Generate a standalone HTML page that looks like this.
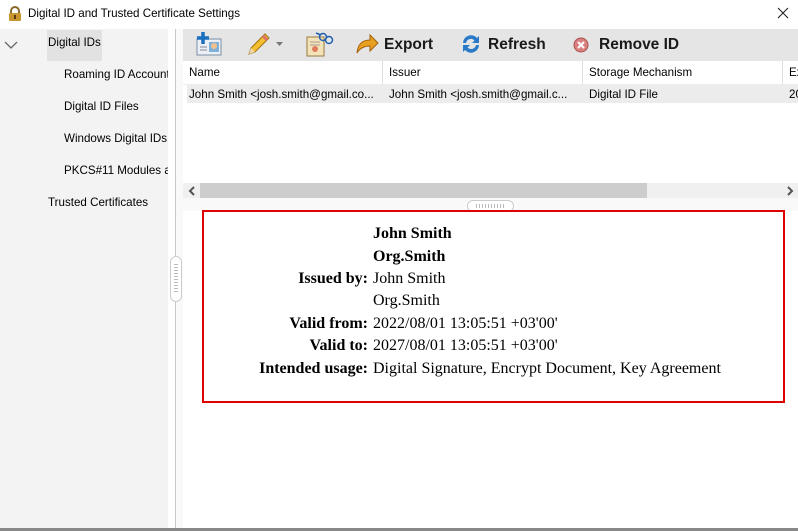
<!DOCTYPE html>
<html><head><meta charset="utf-8"><style>
*{margin:0;padding:0;box-sizing:border-box}
body{width:798px;height:531px;overflow:hidden;background:#fff;font-family:"Liberation Sans",sans-serif;font-size:11.6px;color:#000;position:relative}
.a{position:absolute}
.serif{font-family:"Liberation Serif",serif;font-size:16px;white-space:nowrap}
.tb{font-size:15.5px;font-weight:bold;color:#1a1a1a}
</style></head><body>
<svg class="a" style="left:7px;top:6px" width="16" height="16" viewBox="0 0 16 16"><path d="M4 7V5a4 4 0 0 1 8 0v2" fill="none" stroke="#8a6a2a" stroke-width="2"/><rect x="2" y="7" width="12" height="8" rx="1" fill="#c8962e"/><rect x="7" y="9" width="2" height="4" fill="#5a3a10"/></svg>
<div class="a" style="left:28px;top:7px">Digital ID and Trusted Certificate Settings</div>
<svg class="a" style="left:777px;top:7px" width="12" height="12"><path d="M1 1l10 10M11 1L1 11" stroke="#222" stroke-width="1.1"/></svg>
<div class="a" style="left:0;top:29px;width:168px;height:500px;background:#f3f3f3"></div>
<div class="a" style="left:175px;top:29px;width:1px;height:500px;background:#c8c8c8"></div>
<div class="a" style="left:176px;top:29px;width:7px;height:500px;background:#f9f9f9"></div>
<svg class="a" style="left:4px;top:40px" width="14" height="10"><path d="M1 2l6 6 6-6" fill="none" stroke="#666" stroke-width="1.3"/></svg>
<div class="a" style="left:47px;top:30px;width:55px;height:31px;background:#e2e2e2"></div>
<div class="a" style="left:48px;top:36px">Digital IDs</div>
<div class="a" style="left:64px;top:68px;width:104px;overflow:hidden;white-space:nowrap">Roaming ID Accounts</div>
<div class="a" style="left:64px;top:100px">Digital ID Files</div>
<div class="a" style="left:64px;top:132px;width:104px;overflow:hidden;white-space:nowrap">Windows Digital IDs</div>
<div class="a" style="left:64px;top:164px;width:104px;overflow:hidden;white-space:nowrap">PKCS#11 Modules and Tokens</div>
<div class="a" style="left:48px;top:196px">Trusted Certificates</div>
<div class="a" style="left:170px;top:256px;width:12px;height:46px;border:1px solid #ccc;border-radius:6px;background:#fff"></div>
<div class="a" style="left:174px;top:264px;width:4px;height:30px;background:repeating-linear-gradient(#bbb 0 1px,transparent 1px 3px)"></div>
<div class="a" style="left:183px;top:29px;width:615px;height:32px;background:#e5e5e5"></div>
<svg class="a" style="left:195px;top:31px" width="28" height="26" viewBox="0 0 28 26"><rect x="2" y="8" width="24" height="16" fill="#eaf0f6" stroke="#7a8fa6"/><rect x="14" y="11" width="10" height="10" fill="#7fb0d8"/><circle cx="19" cy="15" r="3" fill="#f0c090"/><path d="M5 16h7M5 19h7" stroke="#889"/><path d="M8 1v12M2 7h12" stroke="#1a6fc0" stroke-width="3.5"/></svg>
<svg class="a" style="left:246px;top:32px" width="26" height="24" viewBox="0 0 26 24"><path d="M3 22l2-6 14-14 4 4-14 14z" fill="#f5c030" stroke="#a07010"/><path d="M3 22l2-6 4 4z" fill="#f0d8b0"/><path d="M17 4l4 4" stroke="#e07070" stroke-width="3"/></svg>
<svg class="a" style="left:276px;top:42px" width="8" height="5"><path d="M0 0h7l-3.5 4z" fill="#777"/></svg>
<svg class="a" style="left:304px;top:31px" width="30" height="26" viewBox="0 0 30 26"><rect x="3" y="6" width="17" height="19" fill="#f3e3b8" stroke="#9a7a40"/><circle cx="11" cy="18" r="3" fill="#e07a5a"/><path d="M6 11h10M6 14h10" stroke="#a99"/><circle cx="19" cy="6" r="3.5" fill="none" stroke="#2060b0" stroke-width="1.5"/><circle cx="25" cy="9" r="3.5" fill="none" stroke="#2060b0" stroke-width="1.5"/><path d="M12 2l5 2" stroke="#2060b0" stroke-width="1.5"/></svg>
<svg class="a" style="left:355px;top:33px" width="24" height="22" viewBox="0 0 24 22"><path d="M2 20C3 10 8 7 15 7V2l8 8-8 8v-5C9 13 5 15 2 20z" fill="#e8a020" stroke="#a06010"/></svg>
<div class="a tb" style="left:384px;top:36px">Export</div>
<svg class="a" style="left:460px;top:33px" width="22" height="22" viewBox="0 0 22 22"><path d="M3 10a8 8 0 0 1 14-5l2-2v7h-7l2.5-2.5A5 5 0 0 0 6 10z" fill="#2a7ac8"/><path d="M19 12a8 8 0 0 1-14 5l-2 2v-7h7l-2.5 2.5A5 5 0 0 0 16 12z" fill="#2a7ac8"/></svg>
<div class="a tb" style="left:488px;top:36px">Refresh</div>
<svg class="a" style="left:573px;top:37px" width="16" height="16" viewBox="0 0 16 16"><circle cx="8" cy="8" r="7" fill="#d88080" stroke="#b05050"/><path d="M5 5l6 6M11 5l-6 6" stroke="#fff" stroke-width="2"/></svg>
<div class="a tb" style="left:599px;top:36px">Remove ID</div>
<div class="a" style="left:183px;top:61px;width:615px;height:24px;background:#fff;border-bottom:1px solid #eee"></div>
<div class="a" style="left:382px;top:61px;width:1px;height:24px;background:#e0e0e0"></div>
<div class="a" style="left:582px;top:61px;width:1px;height:24px;background:#e0e0e0"></div>
<div class="a" style="left:782px;top:61px;width:1px;height:24px;background:#e0e0e0"></div>
<div class="a" style="left:189px;top:66px">Name</div>
<div class="a" style="left:389px;top:66px">Issuer</div>
<div class="a" style="left:589px;top:66px">Storage Mechanism</div>
<div class="a" style="left:789px;top:66px">Ex</div>
<div class="a" style="left:187px;top:85px;width:611px;height:18px;background:#ececec"></div>
<div class="a" style="left:189px;top:88px">John Smith &lt;josh.smith@gmail.co...</div>
<div class="a" style="left:389px;top:88px">John Smith &lt;josh.smith@gmail.c...</div>
<div class="a" style="left:589px;top:88px">Digital ID File</div>
<div class="a" style="left:789px;top:88px">20</div>
<div class="a" style="left:183px;top:183px;width:615px;height:15px;background:#f0f0f0"></div>
<div class="a" style="left:200px;top:183px;width:447px;height:15px;background:#cdcdcd"></div>
<svg class="a" style="left:188px;top:186px" width="8" height="10"><path d="M6 1L2 5l4 4" fill="none" stroke="#555" stroke-width="2"/></svg>
<svg class="a" style="left:786px;top:186px" width="8" height="10"><path d="M2 1l4 4-4 4" fill="none" stroke="#555" stroke-width="2"/></svg>
<div class="a" style="left:183px;top:198px;width:615px;height:13px;background:#f9f9f9"></div>
<div class="a" style="left:467px;top:200px;width:47px;height:12px;border:1px solid #ccc;border-radius:6px;background:#fff"></div>
<div class="a" style="left:476px;top:204px;width:29px;height:4px;background:repeating-linear-gradient(90deg,#bbb 0 1px,transparent 1px 3px)"></div>
<div class="a" style="left:202px;top:210px;width:583px;height:193px;border:2px solid #e00000"></div>
<div class="a serif" style="left:373px;top:225px;font-weight:bold">John Smith</div>
<div class="a serif" style="left:373px;top:248px;font-weight:bold">Org.Smith</div>
<div class="a serif" style="right:430px;top:270px;font-weight:bold">Issued by:</div>
<div class="a serif" style="left:373px;top:270px">John Smith</div>
<div class="a serif" style="left:373px;top:292px">Org.Smith</div>
<div class="a serif" style="right:430px;top:315px;font-weight:bold">Valid from:</div>
<div class="a serif" style="left:373px;top:315px">2022/08/01 13:05:51 +03'00'</div>
<div class="a serif" style="right:430px;top:337px;font-weight:bold">Valid to:</div>
<div class="a serif" style="left:373px;top:337px">2027/08/01 13:05:51 +03'00'</div>
<div class="a serif" style="right:430px;top:360px;font-weight:bold">Intended usage:</div>
<div class="a serif" style="left:373px;top:360px">Digital Signature, Encrypt Document, Key Agreement</div>
<div class="a" style="left:0;top:528px;width:798px;height:3px;background:#888"></div>
</body></html>
